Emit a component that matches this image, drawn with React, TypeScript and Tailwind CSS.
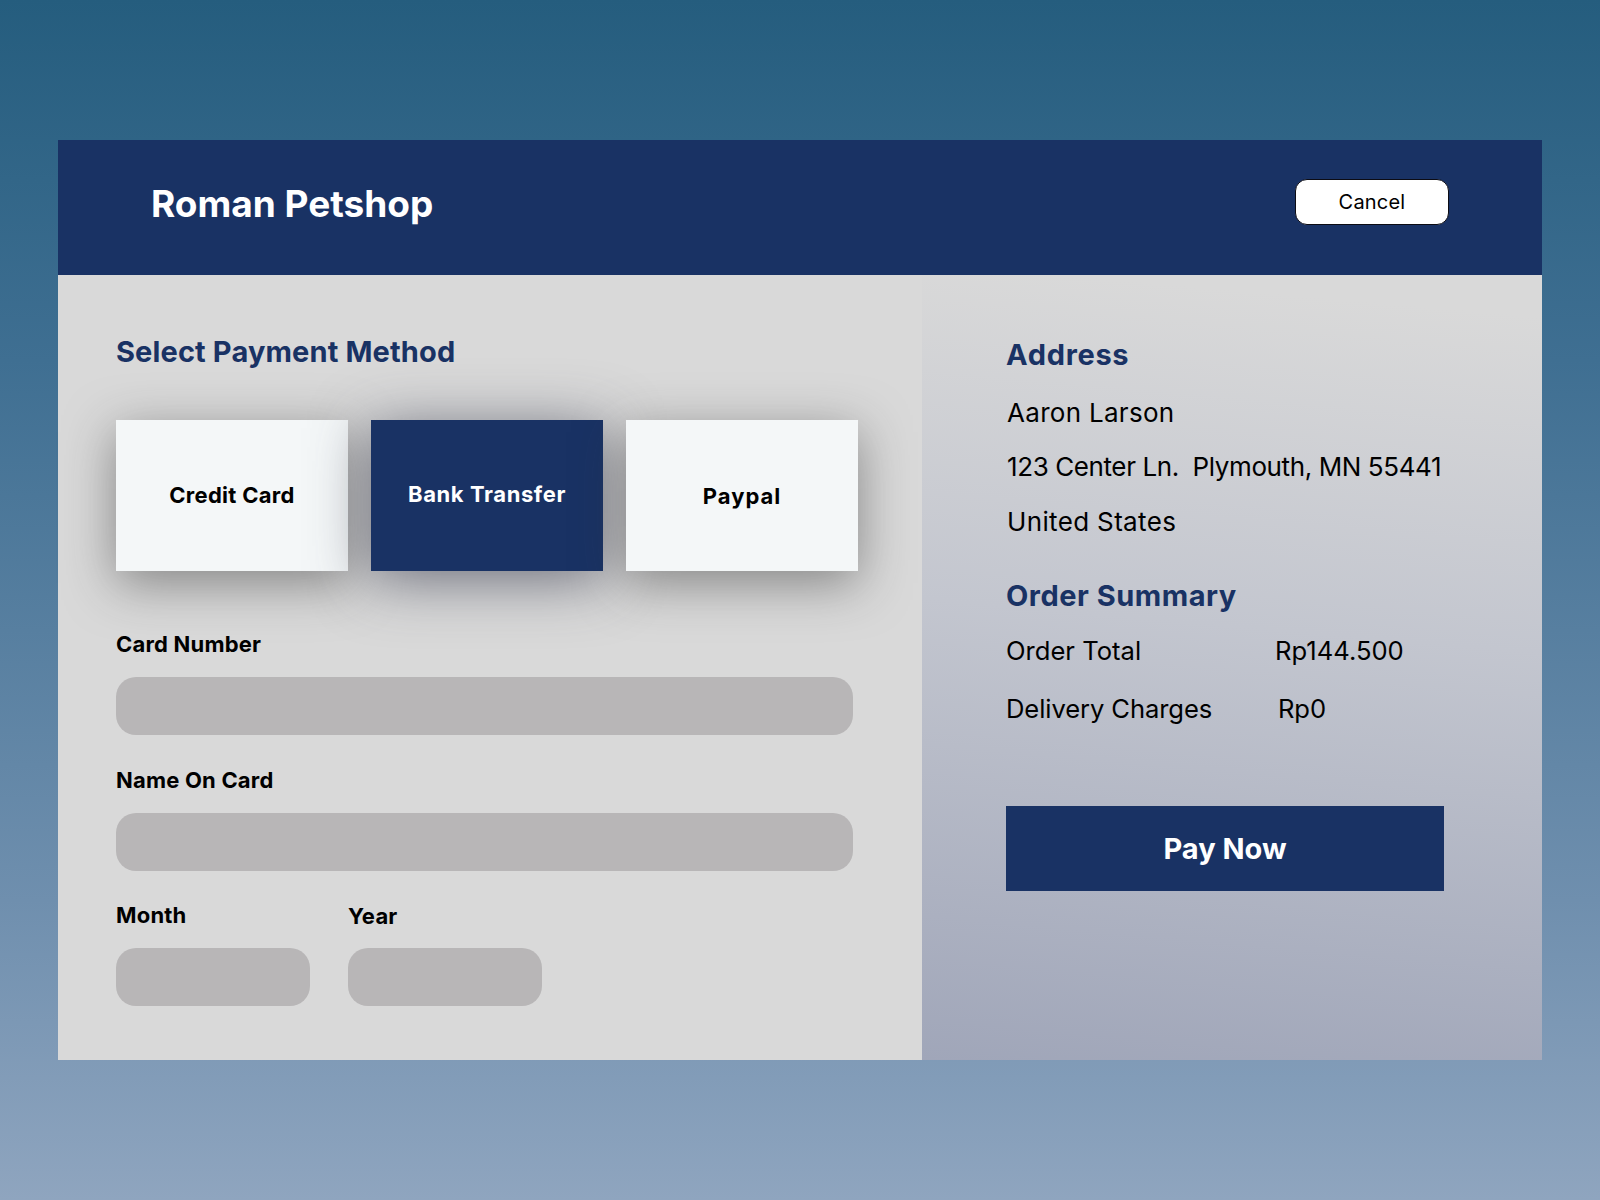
function Field({ label, wide, labelClass }: { label: string; wide?: boolean; labelClass?: string }) {
  return (
    <div className={wide ? "w-[737px]" : "w-[194px]"}>
      <div className={`font-['Inter',sans-serif] text-[22px] leading-[28px] font-bold tracking-[0.2px] text-black ${labelClass ?? ""}`}>{label}</div>
      <div className="mt-[19px] h-[58px] rounded-[20px] bg-[#b8b6b7]" />
    </div>
  );
}

function Method({ label, active, textClass }: { label: string; active?: boolean; textClass?: string }) {
  return (
    <div
      className={
        active
          ? "flex h-[151px] w-[232px] items-center justify-center bg-[#193264] text-white font-['Inter',sans-serif] text-[22px] font-bold tracking-[0.6px] shadow-[0_8px_58px_rgba(55,58,75,0.68)]"
          : "flex h-[151px] w-[232px] items-center justify-center bg-[#f4f7f8] text-black font-['Inter',sans-serif] text-[22px] font-bold tracking-[0.3px] shadow-[0_12px_50px_rgba(50,50,50,0.5)]"
      }
    >
      <span className={textClass}>{label}</span>
    </div>
  );
}

export default function App() {
  return (
    <div className="h-[1200px] w-[1600px] overflow-hidden bg-[linear-gradient(180deg,#255d7e_0%,#3f6f92_30%,#6f8fae_75%,#8fa5bf_100%)] pl-[58px] pt-[140px] font-['Inter',sans-serif]">
      <div className="w-[1484px]">
        <div className="flex h-[135px] items-center justify-between bg-[#193264] pl-[93px] pr-[93px]">
          <div className="mb-[7px] text-[37px] font-bold tracking-[0px] text-white">Roman Petshop</div>
          <button className="mb-[11px] h-[46px] w-[154px] rounded-[12px] border border-[#0c0c14] bg-white text-[20px] tracking-[0.2px] text-black">Cancel</button>
        </div>
        <div className="flex h-[785px]">
          <div className="w-[864px] bg-[#d9d9d9] pl-[58px] pt-[57px]">
            <div className="text-[29px] font-bold leading-[40px] tracking-[0.13px] text-[#193264]">Select Payment Method</div>
            <div className="mt-[48px] flex gap-[23px]">
              <Method label="Credit Card" textClass="-mt-[1px]" />
              <Method label="Bank Transfer" active textClass="-mt-[2px]" />
              <Method label="Paypal" textClass="mt-[1px] tracking-[1px]" />
            </div>
            <div className="mt-[59px] flex flex-col gap-[30.5px]">
              <Field label="Card Number" wide />
              <Field label="Name On Card" wide />
              <div className="flex gap-[38px]">
                <Field label="Month" />
                <Field label="Year" labelClass="mt-[1px] -mb-[1px]" />
              </div>
            </div>
          </div>
          <div className="flex-1 bg-[linear-gradient(185deg,#d9d9d9_5%,#c3c6cf_45%,#a0a6b9_100%)] pl-[84px] pt-[60px]">
            <div className="text-[29px] font-bold leading-[40px] tracking-[0.7px] text-[#193264]">Address</div>
            <div className="mt-[18px] pl-[1px] text-[26px] leading-[40px] tracking-[0.3px] text-black">Aaron Larson</div>
            <div className="mt-[14px] pl-[1px] whitespace-pre text-[26px] leading-[40px] tracking-[-0.4px] text-black">123 Center Ln.  Plymouth, MN 55441</div>
            <div className="mt-[15px] pl-[1px] text-[26px] leading-[40px] tracking-[0.35px] text-black">United States</div>
            <div className="mt-[34px] text-[29px] font-bold leading-[40px] tracking-[0.5px] text-[#193264]">Order Summary</div>
            <div className="mt-[15px] flex text-[25.6px] leading-[40px] text-black"><span className="w-[269px]">Order Total</span><span>Rp144.500</span></div>
            <div className="mt-[18px] flex text-[25.6px] leading-[40px] tracking-[-0.1px] text-black"><span className="w-[272px]">Delivery Charges</span><span>Rp0</span></div>
            <button className="mt-[77px] h-[85px] w-[438px] bg-[#193264] text-[29px] font-bold text-white">Pay Now</button>
          </div>
        </div>
      </div>
    </div>
  );
}
